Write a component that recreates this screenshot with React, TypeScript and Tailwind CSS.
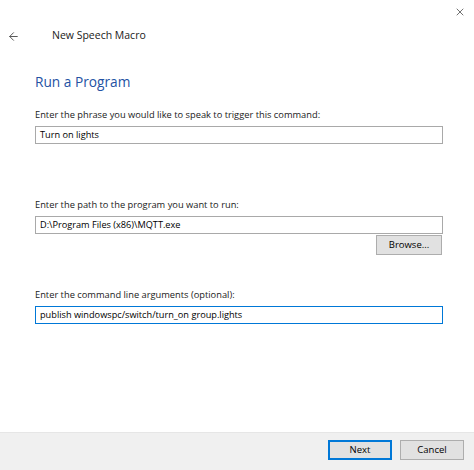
import { ArrowLeft, X } from "lucide-react";

const font = { fontFamily: '"Segoe UI", "Open Sans", "Noto Sans", sans-serif' };

function Field({
  label,
  value,
  focused,
  className,
}: {
  label: string;
  value: string;
  focused?: boolean;
  className?: string;
}) {
  return (
    <div className={className}>
      <div className="text-[9.3px] leading-[16px] text-[#1a1a1a]">{label}</div>
      <div
        className={
          "mt-[3px] flex h-[18px] items-center border px-[4px] text-[9.2px] text-black " +
          (focused ? "border-[#0078d7]" : "border-[#a9a9a9]")
        }
      >
        {value}
      </div>
    </div>
  );
}

export default function App() {
  return (
    <div
      className="flex h-[470px] w-[474px] flex-col overflow-hidden bg-white"
      style={font}
    >
      <div className="flex h-[24px] items-center justify-end pr-[8px]">
        <X className="size-[12px] text-[#333]" strokeWidth={1.4} />
      </div>

      <div className="flex h-[24px] items-center">
        <ArrowLeft className="ml-[7px] size-[13px] text-[#555]" strokeWidth={1.8} />
        <span className="ml-[32px] text-[10.5px] text-[#1a1a1a]">New Speech Macro</span>
      </div>

      <div className="pl-[35px] pr-[31px]">
        <h1 className="mt-[24px] text-[13.7px] leading-[20px] text-[#2352a3]">
          Run a Program
        </h1>

        <Field
          className="mt-[15px]"
          label="Enter the phrase you would like to speak to trigger this command:"
          value="Turn on lights"
        />

        <Field
          className="mt-[53px]"
          label="Enter the path to the program you want to run:"
          value="D:\Program Files (x86)\MQTT.exe"
        />
        <div className="flex justify-end pr-[1px]">
          <button className="mt-[1px] h-[20px] w-[66px] border border-[#adadad] bg-[#e1e1e1] text-[9.5px] text-black">
            Browse...
          </button>
        </div>

        <Field
          className="mt-[32px]"
          label="Enter the command line arguments (optional):"
          value="publish windowspc/switch/turn_on group.lights"
          focused
        />
      </div>

      <div className="mt-auto flex h-[38px] items-start justify-end gap-[8px] border-t border-[#e6e6e6] bg-[#f0f0f0] pr-[10px] pt-[7px]">
        <button className="h-[20px] w-[64px] border-2 border-[#0078d7] bg-[#e1e1e1] text-[9.5px] text-black">
          Next
        </button>
        <button className="h-[20px] w-[64px] border border-[#adadad] bg-[#e1e1e1] text-[9.5px] text-black">
          Cancel
        </button>
      </div>
    </div>
  );
}
